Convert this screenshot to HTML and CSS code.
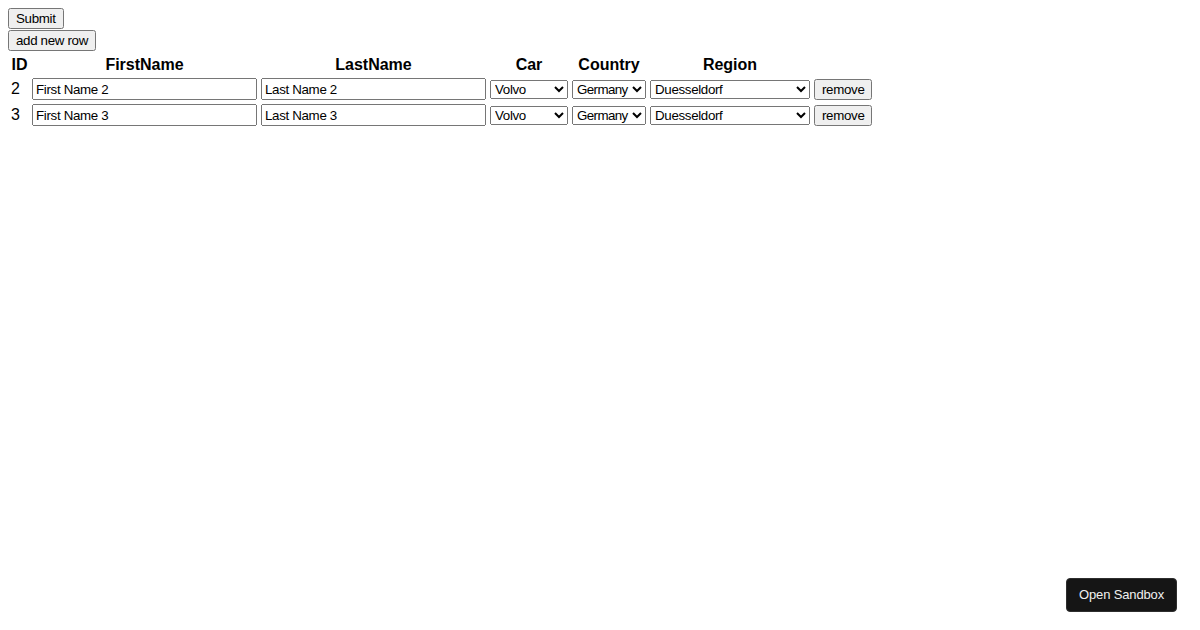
FILE: index.html
```html
<!DOCTYPE html>
<html>
<head>
<meta charset="utf-8">
<link rel="stylesheet" href="styles.css">
</head>
<body>
<div class="actions"><button class="btn">Submit</button></div>
<div class="actions"><button class="btn">add new row</button></div>
<table class="grid">
  <thead>
    <tr><th class="idh">ID</th><th>FirstName</th><th>LastName</th><th>Car</th><th>Country</th><th>Region</th><th></th></tr>
  </thead>
  <tbody>
    <tr>
      <td class="id">2</td>
      <td><input class="name" type="text" value="First Name 2"></td>
      <td><input class="name" type="text" value="Last Name 2"></td>
      <td><select class="car"><option>Volvo</option></select></td>
      <td><select class="country"><option>Germany</option></select></td>
      <td><select class="region"><option>Duesseldorf</option></select></td>
      <td><button class="btn remove">remove</button></td>
    </tr>
    <tr>
      <td class="id">3</td>
      <td><input class="name" type="text" value="First Name 3"></td>
      <td><input class="name" type="text" value="Last Name 3"></td>
      <td><select class="car"><option>Volvo</option></select></td>
      <td><select class="country"><option>Germany</option></select></td>
      <td><select class="region"><option>Duesseldorf</option></select></td>
      <td><button class="btn remove">remove</button></td>
    </tr>
  </tbody>
</table>
<a class="sandbox">Open Sandbox</a>
</body>
</html>
```
FILE: styles.css
```css
body {
  margin: 8px;
  font-family: "Liberation Sans", Arial, sans-serif;
  color: #000;
  background: #fff;
}
button, input, select {
  font-family: "Liberation Sans", Arial, sans-serif;
  font-size: 13.333px;
  letter-spacing: -0.33px;
}
.actions {
  line-height: 0;
}
.actions .btn {
  line-height: normal;
  margin-bottom: 1px;
}
.grid th {
  font-weight: bold;
  padding: 2px 1px 1px;
}
.grid .idh {
  min-width: 17px;
}
.grid .id {
  text-align: left;
}
.name {
  width: 225px;
  height: 22px;
  box-sizing: border-box;
}
.car {
  width: 78px;
}
.country {
  width: 74px;
  letter-spacing: -0.6px;
}
.region {
  width: 160px;
}
.sandbox {
  position: fixed;
  right: 23px;
  bottom: 18px;
  box-sizing: border-box;
  background: #151515;
  color: #f0f0f0;
  font-size: 13px;
  letter-spacing: -0.15px;
  padding: 0 12px;
  height: 34px;
  line-height: 32px;
  border-radius: 4px;
  border: 1px solid #2e2e2e;
}
```
